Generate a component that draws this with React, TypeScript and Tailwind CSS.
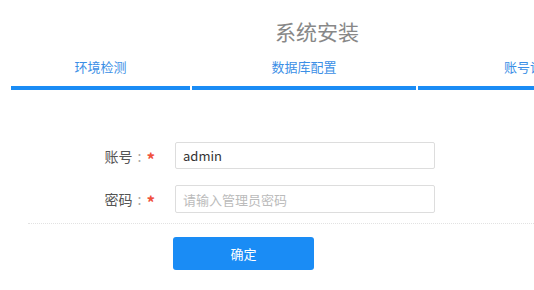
const steps = [
  { name: "环境检测", width: "w-[179px]" },
  { name: "数据库配置", width: "w-[224px]" },
  { name: "账号设置", width: "w-[224px]" },
];

function FieldLabel({ text }: { text: string }) {
  return (
    <div className="flex w-[155px] shrink-0 items-center justify-end text-[14px] leading-[20px]">
      <span className="text-[#555]">{text}</span>
      <span className="ml-[5px] text-[#aaa]">:</span>
      <span className="relative top-[3px] ml-[5px] text-[17px] leading-[20px] font-bold text-[#f0503c]">*</span>
    </div>
  );
}

export default function App() {
  return (
    <div
      className="h-[290px] w-[534px] overflow-hidden bg-white"
      style={{ fontFamily: '"Microsoft YaHei", "Noto Sans CJK SC", "Liberation Sans", sans-serif' }}
    >
      <div className="flex w-[634px] flex-col">
        <h1 className="pt-[17px] text-center text-[21px] leading-[28px] text-[#888]">
          系统安装
        </h1>

        <div className="ml-[11px] mt-[13px] flex gap-[2px]">
          {steps.map((step) => (
            <div key={step.name} className={`flex shrink-0 flex-col items-center ${step.width}`}>
              <span className="text-[13px] leading-[18px] text-[#3b8fe6]">{step.name}</span>
              <div className="mt-[10px] h-[4px] w-full bg-[#1a8cf5]" />
            </div>
          ))}
        </div>

        <div className="mt-[52px] flex items-center">
          <FieldLabel text="账号" />
          <input
            defaultValue="admin"
            className="ml-[20px] h-[27px] w-[260px] rounded-[2px] border border-[#ddd] px-[7px] text-[13px] text-[#333] outline-none"
          />
        </div>

        <div className="mt-[16px] flex items-center">
          <FieldLabel text="密码" />
          <input
            type="password"
            placeholder="请输入管理员密码"
            className="ml-[20px] h-[28px] w-[260px] rounded-[2px] border border-[#ddd] px-[7px] text-[13px] text-[#333] outline-none placeholder:text-[#bbb]"
          />
        </div>

        <div className="ml-[28px] mt-[10px] border-t border-dotted border-[#e2e2e2]" />

        <button
          type="button"
          className="ml-[173px] mt-[13px] h-[33px] w-[141px] rounded-[3px] bg-[#1a8cf5] text-[13px] text-white"
        >
          确定
        </button>
      </div>
    </div>
  );
}
